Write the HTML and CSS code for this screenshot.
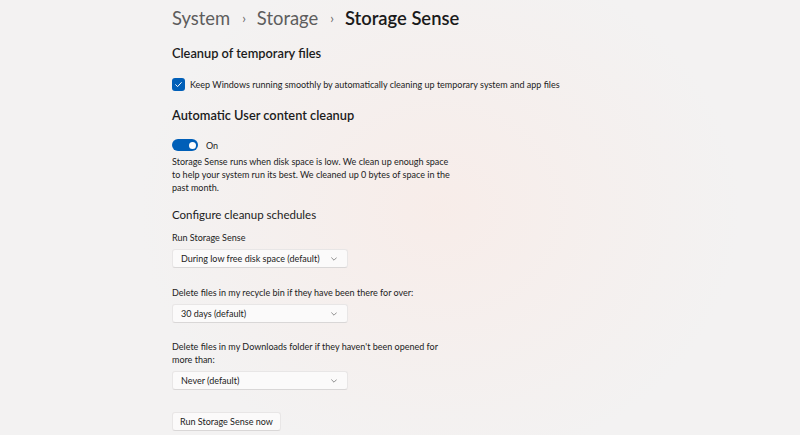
FILE: index.html
```html
<!DOCTYPE html>
<html lang="en">
<head>
<meta charset="utf-8">
<title>Storage Sense</title>
<link rel="stylesheet" href="styles.css">
</head>
<body>
<main class="page">
  <nav class="crumbs">
    <span class="crumb">System</span>
    <span class="sep">›</span>
    <span class="crumb">Storage</span>
    <span class="sep">›</span>
    <span class="crumb current">Storage Sense</span>
  </nav>

  <h2 class="section-title first">Cleanup of temporary files</h2>
  <label class="check-row">
    <span class="checkbox">
      <svg viewBox="0 0 12 12" width="9" height="9"><path d="M2.2 6.3 L4.8 8.8 L9.8 3.4" fill="none" stroke="#fff" stroke-width="1.3" stroke-linecap="round" stroke-linejoin="round"/></svg>
    </span>
    <span class="body-text">Keep Windows running smoothly by automatically cleaning up temporary system and app files</span>
  </label>

  <h2 class="section-title second">Automatic User content cleanup</h2>
  <div class="toggle-row">
    <span class="toggle"><span class="knob"></span></span>
    <span class="body-text">On</span>
  </div>
  <p class="desc">Storage Sense runs when disk space is low. We clean up enough space to help your system run its best. We cleaned up 0 bytes of space in the past month.</p>

  <h3 class="sub-title">Configure cleanup schedules</h3>

  <div class="field">
    <div class="label">Run Storage Sense</div>
    <div class="select"><span>During low free disk space (default)</span><svg class="chev" viewBox="0 0 10 6" width="6" height="4"><path d="M1 1 L5 5 L9 1" fill="none" stroke="#666" stroke-width="1.2" stroke-linecap="round" stroke-linejoin="round"/></svg></div>
  </div>

  <div class="field gap">
    <div class="label">Delete files in my recycle bin if they have been there for over:</div>
    <div class="select"><span>30 days (default)</span><svg class="chev" viewBox="0 0 10 6" width="6" height="4"><path d="M1 1 L5 5 L9 1" fill="none" stroke="#666" stroke-width="1.2" stroke-linecap="round" stroke-linejoin="round"/></svg></div>
  </div>

  <div class="field gap2">
    <div class="label wrap">Delete files in my Downloads folder if they haven't been opened for more than:</div>
    <div class="select"><span>Never (default)</span><svg class="chev" viewBox="0 0 10 6" width="6" height="4"><path d="M1 1 L5 5 L9 1" fill="none" stroke="#666" stroke-width="1.2" stroke-linecap="round" stroke-linejoin="round"/></svg></div>
  </div>

  <button class="btn" type="button">Run Storage Sense now</button>
</main>
</body>
</html>
```

FILE: styles.css
```css
html, body {
  margin: 0;
  padding: 0;
  height: 100%;
}
body {
  background:
    radial-gradient(ellipse 300px 260px at 440px 210px, rgba(248, 236, 232, 0.9), rgba(243, 242, 242, 0) 100%),
    #f3f2f2;
  font-family: Lato, "Noto Sans", sans-serif;
  color: #1b1b1b;
  overflow: hidden;
}
.page {
  display: flex;
  flex-direction: column;
  align-items: flex-start;
  padding: 4px 0 0 172px;
}
.crumbs {
  display: flex;
  align-items: baseline;
  font-size: 18.4px;
  line-height: 28px;
  height: 28px;
}
.crumb { color: #5d5d5d; }
.crumb.current { color: #1a1a1a; font-weight: 600; }
.sep {
  color: #6a6a6a;
  font-size: 13px;
  margin: 0 11px 0 12px;
  position: relative;
  top: -2px;
}
.section-title {
  margin: 0;
  font-size: 12.8px;
  font-weight: 600;
  line-height: 18px;
}
.section-title.first { margin-top: 12px; }
.section-title.second { margin-top: 15px; }
.check-row {
  display: flex;
  align-items: center;
  gap: 5px;
  margin-top: 15px;
  height: 14px;
}
.checkbox {
  width: 13px;
  height: 13px;
  border-radius: 3px;
  background: #005fb8;
  display: flex;
  align-items: center;
  justify-content: center;
}
.body-text {
  font-size: 9px;
  line-height: 13px;
  color: #222;
  white-space: nowrap;
}
.toggle-row {
  display: flex;
  align-items: center;
  gap: 8px;
  margin-top: 14px;
  height: 14px;
}
.toggle {
  width: 26px;
  height: 12px;
  border-radius: 6px;
  background: #005fb8;
  display: flex;
  align-items: center;
  justify-content: flex-end;
  padding-right: 2.5px;
  box-sizing: border-box;
}
.knob {
  width: 7px;
  height: 7px;
  border-radius: 50%;
  background: #fff;
}
.desc {
  margin: 3px 0 0;
  width: 284px;
  font-size: 9px;
  line-height: 13px;
  color: #222;
}
.sub-title {
  margin: 13px 0 0;
  font-size: 11.5px;
  font-weight: 400;
  line-height: 16px;
  color: #1b1b1b;
}
.field {
  display: flex;
  flex-direction: column;
  align-items: flex-start;
  margin-top: 8px;
}
.field.gap { margin-top: 18px; }
.field.gap2 { margin-top: 17px; }
.label {
  font-size: 9px;
  line-height: 13px;
  color: #222;
}
.label.wrap { width: 280px; }
.select {
  margin-top: 5px;
  width: 176px;
  height: 19px;
  box-sizing: border-box;
  background: #fbfafa;
  border: 1px solid #e8e6e6;
  border-bottom-color: #d9d7d7;
  border-radius: 3px;
  display: flex;
  align-items: center;
  justify-content: space-between;
  padding: 0 10px 0 8px;
  font-size: 9px;
  color: #222;
  white-space: nowrap;
}
.chev { display: block; }
.btn {
  margin-top: 22px;
  height: 19px;
  padding: 0 7px;
  background: #fbfafa;
  border: 1px solid #e8e6e6;
  border-bottom-color: #d9d7d7;
  border-radius: 3px;
  font-family: inherit;
  font-size: 9px;
  color: #222;
  line-height: 17px;
}
```
